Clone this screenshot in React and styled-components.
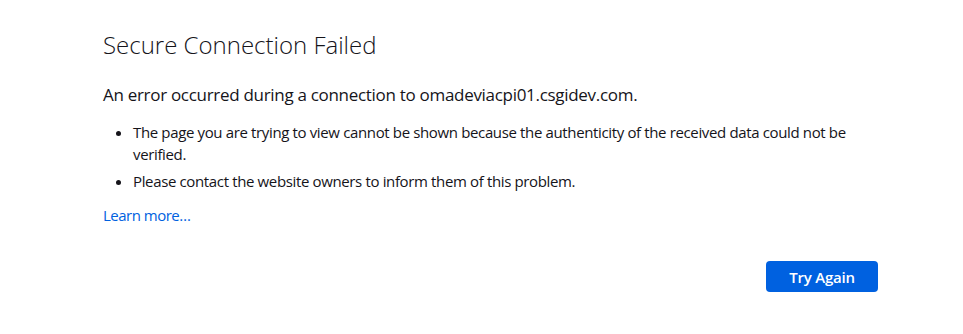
import React from "react";
import styled, { createGlobalStyle } from "styled-components";

const GlobalStyle = createGlobalStyle`
  html, body {
    margin: 0;
    padding: 0;
    background: #ffffff;
  }
  body {
    font-family: "Open Sans", "Noto Sans", sans-serif;
    color: #15141a;
  }
`;

const Page = styled.main`
  padding: 27px 85px 0 103px;
`;

const Container = styled.div`
  display: flex;
  flex-direction: column;
`;

const Title = styled.h1`
  margin: 0;
  font-size: 24px;
  font-weight: 300;
  line-height: 36px;
`;

const Intro = styled.p`
  margin: 20px 0 0;
  font-size: 17px;
  line-height: 24px;
  letter-spacing: -0.3px;
`;

const List = styled.ul`
  margin: 14px 0 0;
  padding-left: 30px;
  font-size: 15px;
  line-height: 22px;
  letter-spacing: -0.36px;
`;

const Item = styled.li`
  & + & {
    margin-top: 5px;
  }
`;

const LearnMore = styled.a`
  margin-top: 12px;
  font-size: 15px;
  line-height: 22px;
  color: #0061e0;
  text-decoration: none;
  letter-spacing: -0.5px;
  align-self: flex-start;
`;

const Actions = styled.div`
  display: flex;
  justify-content: flex-end;
  margin-top: 35px;
`;

const Button = styled.button`
  width: 112px;
  height: 31px;
  border: none;
  border-radius: 4px;
  background: #0061e0;
  color: #ffffff;
  font-family: inherit;
  font-size: 15px;
  font-weight: 600;
  letter-spacing: -0.2px;
  cursor: pointer;
`;

export default function App() {
  return (
    <>
      <GlobalStyle />
      <Page>
        <Container>
          <Title>Secure Connection Failed</Title>
          <Intro>An error occurred during a connection to omadeviacpi01.csgidev.com.</Intro>
          <List>
            <Item>
              The page you are trying to view cannot be shown because the authenticity of the received data could not be verified.
            </Item>
            <Item>Please contact the website owners to inform them of this problem.</Item>
          </List>
          <LearnMore href="#">Learn more…</LearnMore>
          <Actions>
            <Button>Try Again</Button>
          </Actions>
        </Container>
      </Page>
    </>
  );
}
